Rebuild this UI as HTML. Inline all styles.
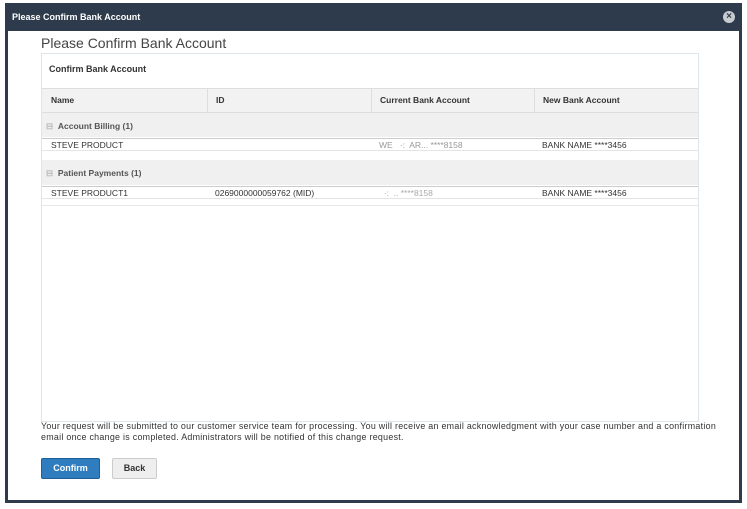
<!DOCTYPE html>
<html><head><style>
body{margin:0;width:747px;height:509px;background:#fff;font-family:"Liberation Sans",Arial,sans-serif;position:relative;overflow:hidden}
.dlg{position:absolute;left:5px;top:3px;width:731px;height:497px;border:3px solid #2d3b4c;border-top:0;background:#fff}
.tb{position:absolute;left:5px;top:3px;width:737px;height:28px;background:#2d3b4c;color:#fff;font-size:9px;font-weight:bold;line-height:29px}
.tb span{margin-left:7px}
.x{position:absolute;right:7px;top:8px;width:12px;height:12px;border-radius:50%;background:#c8ccd1;color:#2d3b4c;font-size:10px;line-height:12px;text-align:center;font-weight:bold}
.abs{position:absolute}
.h{left:41px;top:35px;font-size:14px;color:#444}
.panel{left:41px;top:53px;width:656px;height:367px;border:1px solid #dde6ec}
.ph{left:49px;top:64px;font-size:9px;font-weight:bold;color:#333}
.row{position:absolute;left:42px;width:656px;font-size:8.5px;color:#333}
.c{position:absolute;top:0}
</style></head><body>
<div class="dlg"></div>
<div class="tb"><span>Please Confirm Bank Account</span><div class="x">×</div></div>
<div class="abs h">Please Confirm Bank Account</div>
<div class="abs panel"></div>
<div class="abs ph">Confirm Bank Account</div>
<div class="row" style="top:88px;height:23px;background:#f2f2f2;border-top:1px solid #ddd;border-bottom:1px solid #ddd;font-weight:bold;font-size:8.5px;line-height:23px">
<span class="c" style="left:9px">Name</span>
<span class="c" style="left:165px;border-left:1px solid #ddd;padding-left:8px;height:23px">ID</span>
<span class="c" style="left:329px;border-left:1px solid #ddd;padding-left:8px;height:23px">Current Bank Account</span>
<span class="c" style="left:492px;border-left:1px solid #ddd;padding-left:8px;height:23px">New Bank Account</span>
</div>
<div class="row" style="top:113px;height:24px;background:#f0f0f0;line-height:26px;font-weight:bold;color:#555"><span style="color:#bbb;margin-left:4px">⊟</span> &nbsp;Account Billing (1)</div>
<div class="row" style="top:138px;height:11px;border-top:1px solid #ccc;border-bottom:1px solid #e4e4e4;line-height:12px">
<span class="c" style="left:9px">STEVE PRODUCT</span><span class="c" style="left:337px;color:#999">WE&nbsp;&nbsp; ·:&nbsp; AR... ****8158</span><span class="c" style="left:500px">BANK NAME ****3456</span></div>
<div class="row" style="top:160px;height:25px;background:#f0f0f0;line-height:26px;font-weight:bold;color:#555"><span style="color:#bbb;margin-left:4px">⊟</span> &nbsp;Patient Payments (1)</div>
<div class="row" style="top:186px;height:11px;border-top:1px solid #ccc;border-bottom:1px solid #e4e4e4;line-height:12px">
<span class="c" style="left:9px">STEVE PRODUCT1</span><span class="c" style="left:173px">0269000000059762 (MID)</span><span class="c" style="left:337px;color:#aaa">&nbsp;&nbsp;·:&nbsp; .. ****8158</span><span class="c" style="left:500px">BANK NAME ****3456</span></div>
<div class="row" style="top:205px;height:0;border-top:1px solid #e8e8e8"></div>
<div class="abs" style="left:41px;top:421px;width:700px;font-size:8.9px;color:#333;line-height:10.5px;white-space:nowrap;letter-spacing:0.28px">Your request will be submitted to our customer service team for processing. You will receive an email acknowledgment with your case number and a confirmation<br>email once change is completed. Administrators will be notified of this change request.</div>
<div class="abs" style="left:41px;top:458px;width:57px;height:19px;background:#2f7dbf;border:1px solid #1e5f95;border-radius:2px;color:#fff;font-size:9px;font-weight:bold;text-align:center;line-height:19px">Confirm</div>
<div class="abs" style="left:112px;top:458px;width:43px;height:19px;background:#eee;border:1px solid #ccc;border-radius:2px;color:#333;font-size:9px;font-weight:bold;text-align:center;line-height:19px">Back</div>
</body></html>
